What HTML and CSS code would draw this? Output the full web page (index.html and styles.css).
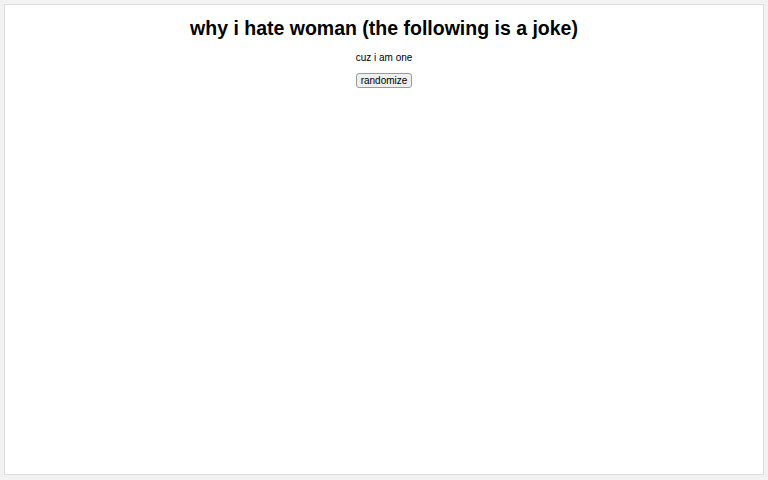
FILE: index.html
```html
<!DOCTYPE html>
<html lang="en">
<head>
<meta charset="utf-8">
<title>why i hate woman</title>
<link rel="stylesheet" href="styles.css">
</head>
<body>
<main class="page">
  <h1 class="title">why i hate woman (the following is a joke)</h1>
  <p class="reason">cuz i am one</p>
  <button class="shuffle" type="button">randomize</button>
</main>
</body>
</html>
```
FILE: styles.css
```css
html, body {
  margin: 0;
  height: 100%;
}

body {
  background: #f2f2f2;
  padding: 4px 4px 5px 4px;
  box-sizing: border-box;
  font-family: "Liberation Sans", Arial, sans-serif;
}

.page {
  box-sizing: border-box;
  width: 760px;
  height: 471px;
  background: #fff;
  border: 1px solid #dcdcdc;
  display: flex;
  flex-direction: column;
  align-items: center;
  padding-top: 15px;
}

.title {
  margin: 0;
  font-size: 19.5px;
  font-weight: bold;
  color: #000;
  line-height: 16px;
}

.reason {
  margin: 16px 0 0 0;
  font-size: 10px;
  line-height: 12px;
  color: #000;
}

.shuffle {
  margin-top: 9px;
  font-family: "Liberation Sans", Arial, sans-serif;
  font-size: 10px;
  line-height: 12px;
  padding: 0 3.5px;
  height: 15px;
  background: #efefef;
  border: 1px solid #9a9a9a;
  border-radius: 3px;
  color: #000;
}
```
